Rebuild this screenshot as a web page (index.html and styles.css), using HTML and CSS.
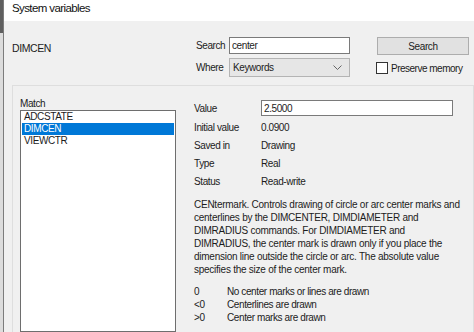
FILE: index.html
```html
<!DOCTYPE html>
<html lang="en">
<head>
  <meta charset="UTF-8">
  <title>System variables</title>
  <link rel="stylesheet" href="styles.css">
</head>
<body>

<div class="desktop">
  <div class="edge">
    <div class="edge-top"></div>
  </div>

  <div class="window">
    <div class="titlebar">System variables</div>

    <!-- Search area -->
    <div class="search-row">
      <div class="var-name">DIMCEN</div>
      <div class="search-form">
        <label class="field-label">Search</label>
        <input class="text-input" type="text" value="center">
        <label class="field-label">Where</label>
        <div class="select">
          <span>Keywords</span>
          <svg class="chevron" width="9" height="5" viewBox="0 0 9 5">
            <path d="M0.5 0.5 L4.5 4.5 L8.5 0.5" fill="none" stroke="#666" stroke-width="1"/>
          </svg>
        </div>
      </div>
      <div class="search-actions">
        <button class="btn">Search</button>
        <label class="check"><span class="box"></span>Preserve memory</label>
      </div>
    </div>

    <!-- Details panel -->
    <div class="panel">
      <div class="match-col">
        <div class="match-label">Match</div>
        <ul class="listbox">
          <li>ADCSTATE</li>
          <li class="selected">DIMCEN</li>
          <li>VIEWCTR</li>
        </ul>
      </div>

      <div class="info-col">
        <div class="props">
          <span class="prop-name">Value</span>
          <input class="text-input value-input" type="text" value="2.5000">
          <span class="prop-name">Initial value</span>
          <span>0.0900</span>
          <span class="prop-name">Saved in</span>
          <span>Drawing</span>
          <span class="prop-name">Type</span>
          <span>Real</span>
          <span class="prop-name">Status</span>
          <span>Read-write</span>
        </div>

        <p class="description">
          CENtermark. Controls drawing of circle or arc center marks and<br>
          centerlines by the DIMCENTER, DIMDIAMETER and<br>
          DIMRADIUS commands. For DIMDIAMETER and<br>
          DIMRADIUS, the center mark is drawn only if you place the<br>
          dimension line outside the circle or arc. The absolute value<br>
          specifies the size of the center mark.
        </p>

        <div class="values">
          <span>0</span><span>No center marks or lines are drawn</span>
          <span>&lt;0</span><span>Centerlines are drawn</span>
          <span>&gt;0</span><span>Center marks are drawn</span>
        </div>
      </div>
    </div>
  </div>
</div>

</body>
</html>
```

FILE: styles.css
```css
/* Dialog Styles */
body {
  margin: 0;
  padding: 0;
  font-family: "Liberation Sans", Arial, sans-serif;
  font-size: 10px;
  letter-spacing: -0.4px;
  color: #1c1c1c;
  background-color: #f0f0f0;
  overflow: hidden;
}
.desktop {
  display: flex;
  height: 332px;
}
.edge {
  width: 3px;
  background-color: #dcdcdc;
  border-right: 1px solid #7c7c7c;
}
.edge-top {
  height: 33px;
  background-color: #5f5f5f;
}
.window {
  flex: 1;
  display: flex;
  flex-direction: column;
}
.titlebar {
  height: 21px;
  line-height: 17px;
  padding-left: 8px;
  background-color: white;
  font-size: 11.5px;
  letter-spacing: -0.6px;
  color: #111;
}
.search-row {
  display: flex;
  align-items: flex-start;
  height: 64px;
  padding-top: 16px;
  box-sizing: border-box;
}
.var-name {
  width: 184px;
  padding-left: 8px;
  padding-top: 5px;
  font-size: 10.5px;
}
.search-form {
  display: grid;
  grid-template-columns: 33px 121px;
  row-gap: 4px;
  align-items: center;
}
.text-input {
  height: 17px;
  box-sizing: border-box;
  border: 1px solid #7a7a7a;
  background: white;
  font-family: inherit;
  font-size: 10px;
  letter-spacing: -0.4px;
  padding: 0 2px;
  margin: 0;
  color: #1c1c1c;
  outline: none;
}
.select {
  height: 19px;
  box-sizing: border-box;
  border: 1px solid #b4b4b4;
  background-color: #e6e6e6;
  display: flex;
  align-items: center;
  justify-content: space-between;
  padding: 0 7px 0 3px;
}
.search-actions {
  margin-left: 27px;
  width: 92px;
  display: flex;
  flex-direction: column;
  gap: 7px;
}
.btn {
  height: 18px;
  border: 1px solid #adadad;
  background-color: #e1e1e1;
  font-family: inherit;
  font-size: 10px;
  letter-spacing: -0.4px;
  color: #1c1c1c;
  padding: 0;
}
.check {
  display: flex;
  align-items: center;
  gap: 3px;
  margin-left: -1px;
  white-space: nowrap;
  letter-spacing: -0.5px;
}
.box {
  width: 10px;
  height: 10px;
  border: 1px solid #333;
  background: white;
}
.panel {
  flex: 1;
  margin-left: 8px;
  border-top: 1px solid #dedede;
  border-left: 1px solid #dedede;
  border-right: 1px solid #dedede;
  display: flex;
  padding: 12px 0 0 7px;
  overflow: hidden;
}
.match-col {
  width: 156px;
  display: flex;
  flex-direction: column;
}
.match-label {
  line-height: 12px;
}
.listbox {
  list-style-type: none;
  margin: 0;
  padding: 0 1px;
  height: 240px;
  background: white;
  border: 1px solid #6e6e6e;
}
.listbox li {
  height: 12px;
  line-height: 12px;
  padding-left: 2px;
}
.listbox li.selected {
  background-color: #0078d7;
  color: white;
}
.info-col {
  margin-left: 18px;
  width: 272px;
}
.props {
  display: grid;
  grid-template-columns: 67px 192px;
  row-gap: 5px;
  align-items: center;
  padding-top: 2px;
}
.props span {
  line-height: 13px;
}
.value-input {
  height: 16px;
}
.description {
  margin: 10px 0 0;
  line-height: 13px;
  letter-spacing: -0.25px;
  white-space: nowrap;
}
.values {
  margin-top: 9px;
  display: grid;
  grid-template-columns: 33px auto;
  line-height: 13px;
}
```
